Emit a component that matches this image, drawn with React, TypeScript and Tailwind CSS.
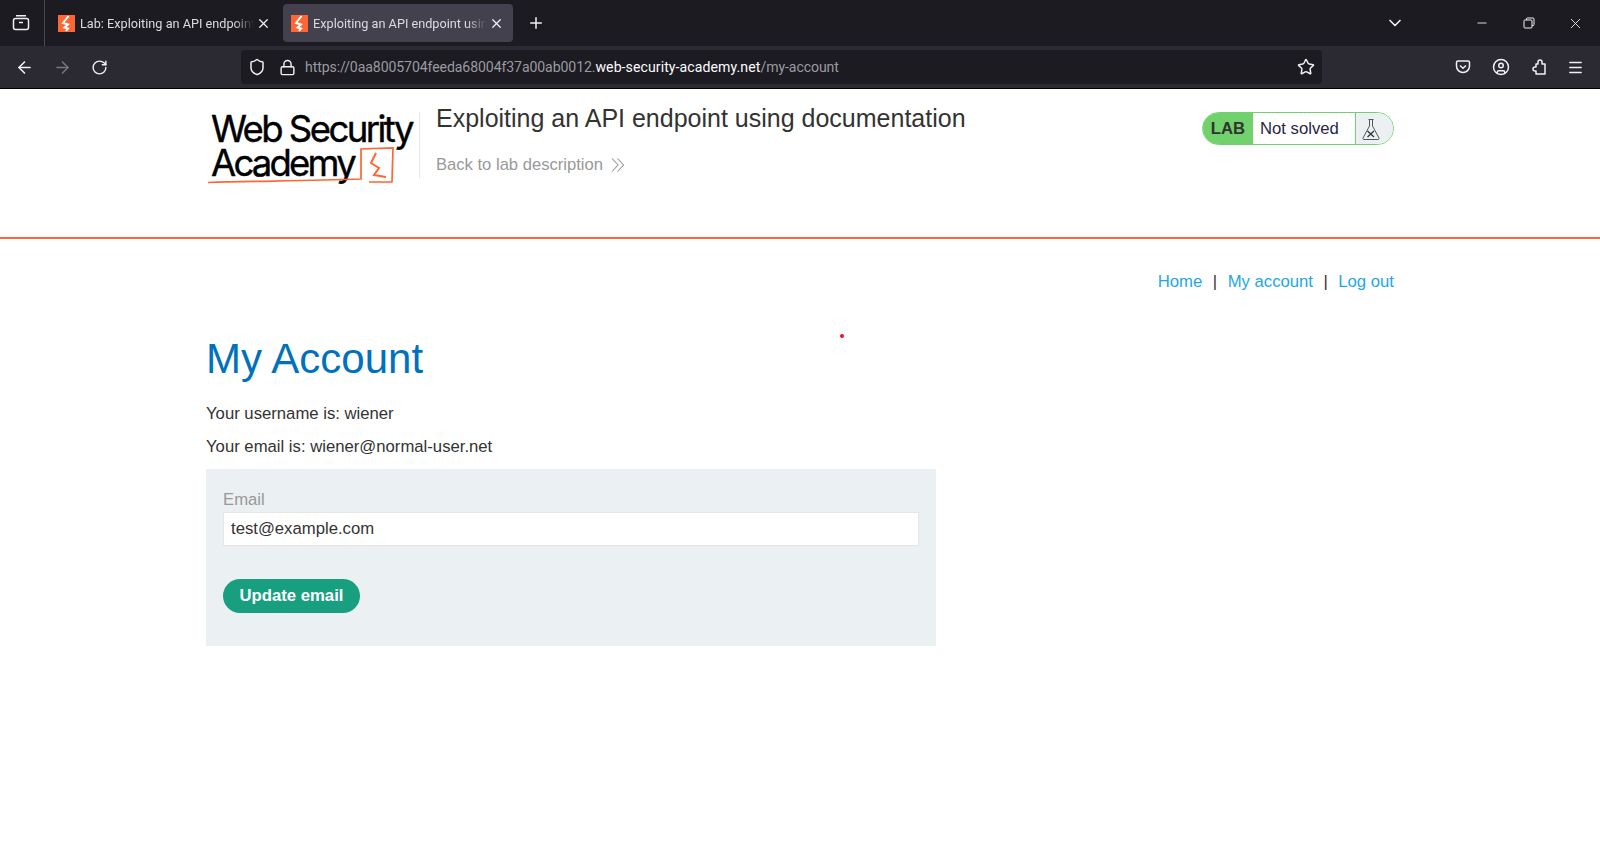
import React from 'react';
import { X, Plus, ArrowLeft, ArrowRight, RotateCw, Shield, Lock, Star, ChevronDown, Minus, Menu, CircleUser } from 'lucide-react';

const Favicon = () => (
    <svg width="17" height="17" viewBox="0 0 17 17" className="shrink-0 mr-[3px]">
        <rect width="17" height="17" fill="#ff6633" />
        <path d="M10.5 1 L5 8 L10 9.5 L6.5 12.5 L10 13.5 L8 16" fill="none" stroke="#fff" strokeWidth="2" />
    </svg>
);

const Tab = ({ title, active }: { title: string; active?: boolean }) => (
    <div className={`flex items-center h-[38px] w-[230px] pl-[8px] pr-[9px] rounded-[4px] gap-[2px] ${active ? 'bg-[#42414d]' : ''}`}>
        <Favicon />
        <span className="flex-1 overflow-hidden whitespace-nowrap pt-[2px] text-[12.7px] text-[#dcdce0] [mask-image:linear-gradient(to_right,black_88%,transparent)]">{title}</span>
        <X size={15} className="text-[#f0f0f3] shrink-0" />
    </div>
);

const BrowserChrome = () => (
    <div className="font-['Roboto',sans-serif]">
        <div className="h-[46px] bg-[#1c1b22] flex items-center">
            <div className="w-[45px] h-full flex items-center justify-center pr-[2px] border-r border-[#4a4a52]">
                <svg width="18" height="18" viewBox="0 0 18 18" fill="none" stroke="#f0f0f3" strokeWidth="1.5">
                    <rect x="1.5" y="4.5" width="15" height="11" rx="2" />
                    <path d="M4 1.8 H14 M7 8.5 H11" />
                </svg>
            </div>
            <div className="flex items-center pl-[5px] gap-[3px]">
                <Tab title="Lab: Exploiting an API endpoint using documentation" />
                <Tab title="Exploiting an API endpoint using documentation" active />
            </div>
            <Plus size={18} className="text-[#f0f0f3] ml-[14px]" />
            <div className="flex-1" />
            <ChevronDown size={20} className="text-[#f0f0f3] mr-[70px]" />
            <Minus size={14} className="text-[#d8d8dc] mr-[34px]" />
            <svg width="12" height="12" viewBox="0 0 12 12" fill="none" stroke="#f0f0f3" strokeWidth="1" className="mr-[32px]">
                <rect x="1" y="3" width="8" height="8" rx="1" />
                <path d="M3.5 3 V1.5 A0.7 0.7 0 0 1 4.2 1 H10 A1 1 0 0 1 11 2 V7.5 A0.7 0.7 0 0 1 10.3 8.5 H9" />
            </svg>
            <X size={17} strokeWidth={1.25} className="text-[#f0f0f3] mr-[16px]" />
        </div>
        <div className="h-[42px] bg-[#2b2a33] flex items-center">
            <ArrowLeft size={19} className="text-[#f0f0f3] ml-[15px]" />
            <ArrowRight size={19} className="text-[#77767d] ml-[19px]" />
            <RotateCw size={17} className="text-[#f0f0f3] ml-[19px]" />
            <div className="h-[34px] w-[1081px] ml-[133px] bg-[#1c1b22] rounded-[4px] flex items-center pl-[7px] pr-[7px]">
                <Shield size={18} className="text-[#f0f0f3] shrink-0" />
                <Lock size={17} className="text-[#f0f0f3] ml-[13px] shrink-0" />
                <span className="ml-[9px] pt-[2px] text-[14.1px] tracking-[-0.1px] text-[#9a9aa0] whitespace-nowrap flex-1">
                    https://0aa8005704feeda68004f37a00ab0012.<span className="text-[#fbfbfe] tracking-[0.08px]">web-security-academy.net</span>/my-account
                </span>
                <Star size={18} className="text-[#f0f0f3] shrink-0" />
            </div>
            <div className="flex-1" />
            <svg width="16" height="16" viewBox="0 0 16 16" fill="none" stroke="#f0f0f3" strokeWidth="1.5" className="mr-[21px]">
                <path d="M1.5 3.5 A1.5 1.5 0 0 1 3 2 H13 A1.5 1.5 0 0 1 14.5 3.5 V7 A6.5 6.5 0 0 1 1.5 7 Z" />
                <path d="M5 6.5 L8 9.2 L11 6.5" />
            </svg>
            <CircleUser size={18} className="text-[#f0f0f3] mr-[20px]" />
            <svg width="18" height="18" viewBox="0 0 18 18" fill="none" stroke="#f0f0f3" strokeWidth="1.5" strokeLinejoin="round" className="mr-[19px]">
                <path d="M6 6 H8 V4 A2 2 0 0 1 12 4 V6 H15 V16 H6 V13 H5 A2 2 0 0 1 5 9 H6 Z" />
            </svg>
            <Menu size={17} className="text-[#f0f0f3] mr-[16px]" />
        </div>
        <div className="h-px bg-black" />
    </div>
);

const Logo = () => (
    <div className="relative w-[210px] h-[80px] font-['Inter',sans-serif] text-black shrink-0">
        <div className="absolute left-[5px] top-[2px] text-[36.5px] leading-[36px] tracking-[-2.55px] whitespace-nowrap [-webkit-text-stroke:0.4px_black]">Web Security</div>
        <div className="absolute left-[5px] top-[36px] text-[36.5px] leading-[36px] tracking-[-2.8px] whitespace-nowrap [-webkit-text-stroke:0.4px_black]">Academy</div>
        <svg width="210" height="80" viewBox="0 0 210 80" fill="none" className="absolute left-0 top-0">
            <path d="M2 73.5 C50 72 100 72 155 70 L155 40 L187 39 L186 73 L163 73" stroke="#ff6633" strokeWidth="1.7" />
            <path d="M170 44 L165 54 L173 59 L168 66 L180 68" stroke="#ff6633" strokeWidth="2" />
        </svg>
    </div>
);

const LabBadge = () => (
    <div className="flex items-stretch h-[33px] w-[192px] rounded-full border border-[#70d16d] overflow-hidden text-[16.7px] leading-none">
        <div className="w-[50px] bg-[#70d16d] flex items-center justify-center pt-[2px] font-bold text-[#333332]">LAB</div>
        <div className="flex-1 flex items-center pl-[7px] pt-[2px] text-[#29263f] bg-white">Not solved</div>
        <div className="w-[38px] bg-[#ebf0f2] border-l border-[#70d16d] flex items-center pl-[5px]">
            <svg width="20" height="24" viewBox="0 0 20 24" fill="none" stroke="#555" strokeWidth="1">
                <path d="M7.5 2.5 H12.5 M8.5 2.5 V9 L2 21 A1 1 0 0 0 3 22.5 H17 A1 1 0 0 0 18 21 L11.5 9 V2.5" />
                <path d="M6.5 14 L13 20 M13 14 L6.5 20" stroke="#333332" strokeWidth="1.3" />
            </svg>
        </div>
    </div>
);

export default function App() {
    return (
        <div className="relative w-full h-[850px] overflow-hidden bg-white font-['Liberation_Sans',sans-serif]">
            <BrowserChrome />

            {/* lab header */}
            <header className="h-[150px] border-b-2 border-[#ff6633]">
                <div className="w-[1188px] ml-[206px] flex items-start pt-[20px]">
                    <Logo />
                    <div className="w-px h-[66px] bg-[#e6e6e6] ml-[3px] mt-[3px]" />
                    <div className="ml-[16px] flex-1">
                        <h2 className="-mt-[6px] text-[25px] leading-[30px] text-[#333332]">Exploiting an API endpoint using documentation</h2>
                        <div className="flex items-center mt-[22px] text-[16.6px] leading-[20px] text-[#999]">
                            Back to lab description
                            <svg width="14" height="16" viewBox="0 0 14 16" fill="none" stroke="#999" strokeWidth="1.1" className="ml-[8px]">
                                <path d="M1 1.5 L7 8 L1 14.5 M6.5 1.5 L12.5 8 L6.5 14.5" />
                            </svg>
                        </div>
                    </div>
                    <div className="mt-[3px]">
                        <LabBadge />
                    </div>
                </div>
            </header>

            <main className="w-[1188px] ml-[206px]">
                <nav className="flex justify-end items-center mt-[33px] text-[16.7px] leading-[20px] text-[#333332]">
                    <a className="text-[#1ea7e4]">Home</a>
                    <span className="mx-[10.5px]">|</span>
                    <a className="text-[#1ea7e4]">My account</a>
                    <span className="mx-[10.5px]">|</span>
                    <a className="text-[#1ea7e4]">Log out</a>
                </nav>

                <h1 className="mt-[42px] text-[42px] leading-[50px] text-[#0071bc]">My Account</h1>
                <p className="mt-[20px] text-[16.7px] leading-[20px] text-[#333332]">Your username is: wiener</p>
                <p className="mt-[13px] text-[16.7px] leading-[20px] text-[#333332]">Your email is: wiener@normal-user.net</p>

                <form className="mt-[12px] w-[730px] h-[177px] bg-[#ebf0f2] pt-[21px] px-[17px]">
                    <label className="block text-[16.7px] leading-[20px] text-[#999]">Email</label>
                    <input
                        readOnly
                        value="test@example.com"
                        className="block mt-[2px] w-[696px] h-[34px] bg-white border border-[#e6e6e6] px-[7px] text-[16.7px] text-[#333332] outline-none"
                    />
                    <button type="button" className="block mt-[33px] w-[137px] h-[34px] rounded-full bg-[#179f80] text-white font-bold text-[16.7px] leading-none">
                        Update email
                    </button>
                </form>
            </main>

            {/* stray cursor dot */}
            <div className="absolute left-[840px] top-[334px] w-[4px] h-[4px] rounded-full bg-[#e8101a]" />
        </div>
    );
}
